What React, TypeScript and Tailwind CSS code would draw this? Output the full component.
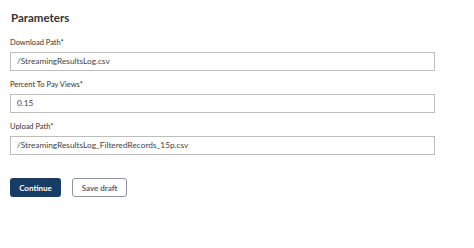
import React from "react";

const Field = ({ label, value }: { label: string; value: string }) => (
  <div className="flex flex-col">
    <label className="text-[7.5px] leading-[10px] text-[#333] h-[10px]">{label}</label>
    <div className="mt-[4px] h-[19px] w-[425px] border border-[#bdbdbd] bg-white flex items-center pl-[6px] text-[8.3px] text-[#444]">
      {value}
    </div>
  </div>
);

export default function App() {
  return (
    <div className="w-[474px] h-[248px] bg-white pl-[10px] pt-[10px]" style={{ fontFamily: "Lato, 'Noto Sans', sans-serif" }}>
      <h2 className="text-[11.5px] leading-[16px] font-bold text-[#333] ml-[1px]">Parameters</h2>
      <div className="mt-[12px] flex flex-col gap-[9px]">
        <Field label="Download Path*" value="/StreamingResultsLog.csv" />
        <Field label="Percent To Pay Views*" value="0.15" />
        <Field label="Upload Path*" value="/StreamingResultsLog_FilteredRecords_15p.csv" />
      </div>
      <div className="mt-[23px] flex gap-[11px]">
        <button className="w-[51px] h-[19px] rounded-[3px] bg-[#173d66] text-white text-[8px] font-bold">Continue</button>
        <button className="w-[55px] h-[19px] rounded-[3px] border border-[#8a93a3] bg-white text-[#5a6478] text-[8px] font-bold">Save draft</button>
      </div>
    </div>
  );
}
